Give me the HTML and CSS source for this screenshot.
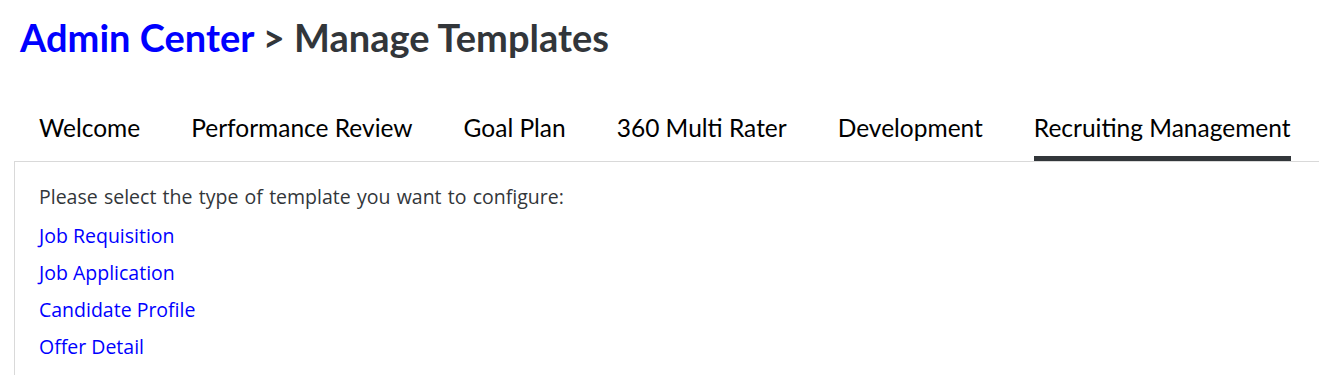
FILE: index.html
```html
<!DOCTYPE html>
<html lang="en">
<head>
    <meta charset="UTF-8">
    <title>Manage Templates</title>
    <link rel="stylesheet" href="styles.css">
</head>
<body>
    <h1 class="page-title"><a href="#">Admin Center</a> &gt; Manage Templates</h1>

    <div class="tabs">
        <div class="tab">Welcome</div>
        <div class="tab">Performance Review</div>
        <div class="tab">Goal Plan</div>
        <div class="tab">360 Multi Rater</div>
        <div class="tab">Development</div>
        <div class="tab selected">Recruiting Management</div>
    </div>

    <div class="panel">
        <p class="intro">Please select the type of template you want to configure:</p>
        <a class="template-link" href="#">Job Requisition</a>
        <a class="template-link" href="#">Job Application</a>
        <a class="template-link" href="#">Candidate Profile</a>
        <a class="template-link" href="#">Offer Detail</a>
    </div>
</body>
</html>
```

FILE: styles.css
```css
body { margin: 0; font-family: Lato, "Liberation Sans", sans-serif; color: #32363a; background: #fff; }

.page-title { margin: 0; padding: 14px 20px 0; font-size: 38px; font-weight: bold; line-height: 46px; color: #32363a; }
.page-title a { color: #0000ff; text-decoration: none; }

.tabs { display: flex; gap: 51px; padding: 53px 0 0 39px; }
.tab {
    font-size: 24.5px;
    line-height: 30px;
    color: #000;
    padding-bottom: 13px;
    border-bottom: 5px solid transparent;
}
.tab.selected { border-bottom-color: #32363a; }

.panel {
    margin-left: 14px;
    border-top: 1px solid #d9d9d9;
    border-left: 1px solid #d9d9d9;
    padding: 20px 24px 10px;
    display: flex;
    flex-direction: column;
    align-items: flex-start;
    font-family: "Open Sans", "Liberation Sans", sans-serif;
}
.intro { margin: 0 0 5px; font-size: 19.5px; line-height: 30px; word-spacing: 1.2px; }
.template-link { color: #0000ff; text-decoration: none; font-size: 19.5px; line-height: 37px; }
```
